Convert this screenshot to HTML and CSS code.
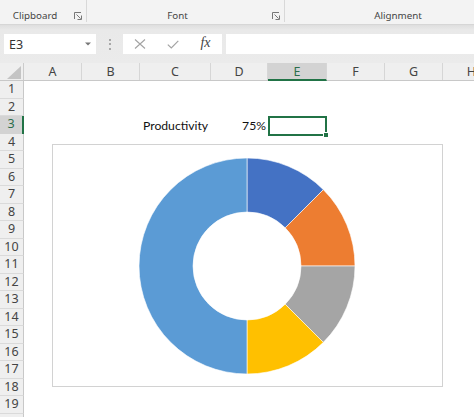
FILE: index.html
```html
<!DOCTYPE html>
<html>
<head>
<meta charset="utf-8">
<link rel="stylesheet" href="styles.css">
</head>
<body>
<div class="app">
  <div class="ribbon">
    <div class="group g-clip">
      <span class="glabel">Clipboard</span>
      <span class="launcher"><svg width="8" height="8" viewBox="0 0 8 8"><path d="M0.5 7V0.5H7" fill="none" stroke="#777" stroke-width="1"/><path d="M2.5 2.5L6.6 6.6M3.5 7.5H7.5V3.5" fill="none" stroke="#777" stroke-width="1"/></svg></span>
    </div>
    <div class="group g-font">
      <span class="glabel">Font</span>
      <span class="launcher"><svg width="8" height="8" viewBox="0 0 8 8"><path d="M0.5 7V0.5H7" fill="none" stroke="#777" stroke-width="1"/><path d="M2.5 2.5L6.6 6.6M3.5 7.5H7.5V3.5" fill="none" stroke="#777" stroke-width="1"/></svg></span>
    </div>
    <div class="group g-align">
      <span class="glabel">Alignment</span>
    </div>
  </div>

  <div class="fbar">
    <div class="namebox">
      <span class="nb-text">E3</span>
      <svg class="dd" width="6" height="4" viewBox="0 0 6 4"><path d="M0 0.5H6L3 3.5Z" fill="#777"/></svg>
    </div>
    <div class="grip"><i></i><i></i><i></i></div>
    <div class="fbtns">
      <span class="fbtn"><svg width="12" height="10" viewBox="0 0 12 10"><path d="M1 0.5L11 9.5M11 0.5L1 9.5" stroke="#a3a3a3" stroke-width="1.1" fill="none"/></svg></span>
      <span class="fbtn"><svg width="12" height="9" viewBox="0 0 12 9"><path d="M0.8 4.6L4.3 8L11.3 0.8" stroke="#a3a3a3" stroke-width="1.2" fill="none"/></svg></span>
      <span class="fbtn fx">fx</span>
    </div>
    <div class="finput"></div>
  </div>

  <div class="sheet">
    <div class="row hdr">
      <div class="corner"><svg width="14" height="13" viewBox="0 0 14 13"><path d="M14 0V13H0Z" fill="#c4c4c4"/></svg></div>
      <div class="ch">A</div>
      <div class="ch">B</div>
      <div class="ch">C</div>
      <div class="ch">D</div>
      <div class="ch sel">E</div>
      <div class="ch">F</div>
      <div class="ch">G</div>
      <div class="ch">H</div>
    </div>
    <div class="row"><div class="rh">1</div></div>
    <div class="row"><div class="rh">2</div></div>
    <div class="row">
      <div class="rh sel">3</div>
      <div class="cell"></div>
      <div class="cell"></div>
      <div class="cell txt">Productivity</div>
      <div class="cell num">75%</div>
      <div class="cell active"><span class="handle"></span></div>
    </div>
    <div class="row"><div class="rh">4</div></div>
    <div class="row"><div class="rh">5</div></div>
    <div class="row"><div class="rh">6</div></div>
    <div class="row"><div class="rh">7</div></div>
    <div class="row"><div class="rh">8</div></div>
    <div class="row"><div class="rh">9</div></div>
    <div class="row"><div class="rh">10</div></div>
    <div class="row"><div class="rh">11</div></div>
    <div class="row"><div class="rh">12</div></div>
    <div class="row"><div class="rh">13</div></div>
    <div class="row"><div class="rh">14</div></div>
    <div class="row"><div class="rh">15</div></div>
    <div class="row"><div class="rh">16</div></div>
    <div class="row"><div class="rh">17</div></div>
    <div class="row"><div class="rh">18</div></div>
    <div class="row"><div class="rh">19</div></div>
    <div class="row"><div class="rh"></div></div>

    <div class="chart">
      <svg width="389" height="241" viewBox="0 0 389 241">
        <g stroke="#ffffff" stroke-width="0.6">
          <path fill="#4472C4" d="M194 13A108 108 0 0 1 270.37 44.63L232.18 82.82A54 54 0 0 0 194 67Z"/>
          <path fill="#ED7D31" d="M270.37 44.63A108 108 0 0 1 302 121L248 121A54 54 0 0 0 232.18 82.82Z"/>
          <path fill="#A5A5A5" d="M302 121A108 108 0 0 1 270.37 197.37L232.18 159.18A54 54 0 0 0 248 121Z"/>
          <path fill="#FFC000" d="M270.37 197.37A108 108 0 0 1 194 229L194 175A54 54 0 0 0 232.18 159.18Z"/>
          <path fill="#5B9BD5" d="M194 229A108 108 0 0 1 194 13L194 67A54 54 0 0 0 194 175Z"/>
        </g>
      </svg>
    </div>
  </div>
</div>
</body>
</html>
```

FILE: styles.css
```css
* { box-sizing: border-box; }
html, body { margin: 0; padding: 0; }
body {
  width: 474px;
  height: 417px;
  overflow: hidden;
  background: #ffffff;
  font-family: "Noto Sans", "DejaVu Sans", sans-serif;
}
.app { width: 474px; height: 417px; overflow: hidden; }

/* Ribbon */
.ribbon {
  display: flex;
  height: 25px;
  background: #f3f3f3;
  border-bottom: 1px solid #d6d6d6;
}
.group {
  display: flex;
  align-items: flex-end;
  height: 22px;
  flex: none;
  border-right: 1px solid #d8d8d8;
}
.g-clip { width: 87px; }
.g-font { width: 198px; }
.g-align { width: 226px; border-right: none; }
.glabel {
  flex: 1;
  text-align: center;
  font-size: 9.8px;
  line-height: 12px;
  color: #454545;
  padding-bottom: 0;
}
.launcher {
  width: 16px;
  height: 12px;
  padding-left: 4px;
  display: flex;
  align-items: center;
}

/* Formula bar */
.fbar {
  display: flex;
  height: 38px;
  padding-top: 9px;
  padding-bottom: 9px;
  background: linear-gradient(#dedede, #e9e9e9 5px, #ebebeb);
}
.namebox {
  margin-left: 4px;
  width: 92px;
  background: #ffffff;
  display: flex;
  align-items: center;
  justify-content: space-between;
  padding: 0 5px 0 5px;
}
.nb-text { font-size: 12.5px; color: #333; }
.grip {
  width: 27px;
  display: flex;
  flex-direction: column;
  align-items: center;
  justify-content: center;
  gap: 2.5px;
}
.grip i {
  display: block;
  width: 2px;
  height: 2px;
  background: #a8a8a8;
}
.fbtns {
  width: 99px;
  background: #ffffff;
  display: flex;
}
.fbtn {
  width: 33px;
  display: flex;
  align-items: center;
  justify-content: center;
}
.fx {
  font-family: "Liberation Serif", "DejaVu Serif", serif;
  font-style: italic;
  font-size: 14px;
  color: #444;
  padding-bottom: 2px;
}
.finput {
  margin-left: 4px;
  flex: 1;
  background: #ffffff;
}

/* Sheet */
.sheet {
  position: relative;
  background: #ffffff;
}
.row {
  display: grid;
  grid-template-columns: 24px 58px 58px 71px 57px 59px 58px 58px 58px;
  height: 17.5px;
}
.row.hdr {
  height: 18px;
  background: #efefef;
  border-bottom: 1px solid #c8c8c8;
}
.corner {
  border-right: 1px solid #cccccc;
  display: flex;
  justify-content: flex-end;
  align-items: flex-end;
  padding: 0 2px 1px 0;
}
.ch {
  border-right: 1px solid #d6d6d6;
  font-size: 12.5px;
  line-height: 17px;
  color: #444;
  text-align: center;
}
.ch.sel {
  background: #d3d3d3;
  border-bottom: 2px solid #217346;
  color: #2c6e4c;
  line-height: 17px;
  height: 18px;
  margin-bottom: -1px;
}
.rh {
  background: #efefef;
  border-right: 1px solid #c8c8c8;
  border-bottom: 1px solid #dadada;
  font-size: 12.5px;
  line-height: 16.5px;
  color: #444;
  text-align: center;
}
.rh.sel {
  background: #d3d3d3;
  border-right: 2px solid #217346;
  color: #2c6e4c;
}
.cell {
  font-family: "Lato", "Liberation Sans", sans-serif;
  font-size: 12.2px;
  line-height: 17.5px;
  color: #111;
  white-space: nowrap;
}
.cell.txt { padding-left: 3px; padding-top: 1px; }
.cell.num { text-align: right; padding-right: 2px; padding-top: 1px; }
.cell.active {
  position: relative;
  border: 2px solid #217346;
  margin: -0.5px 0 -1px 0;
}
.handle {
  position: absolute;
  right: -4px;
  bottom: -4px;
  width: 6px;
  height: 6px;
  background: #217346;
  border: 1px solid #ffffff;
}

/* Chart */
.chart {
  position: absolute;
  left: 52px;
  top: 81px;
  width: 391px;
  height: 243px;
  background: #ffffff;
  border: 1px solid #d2d2d2;
}
.chart svg { display: block; }
```
